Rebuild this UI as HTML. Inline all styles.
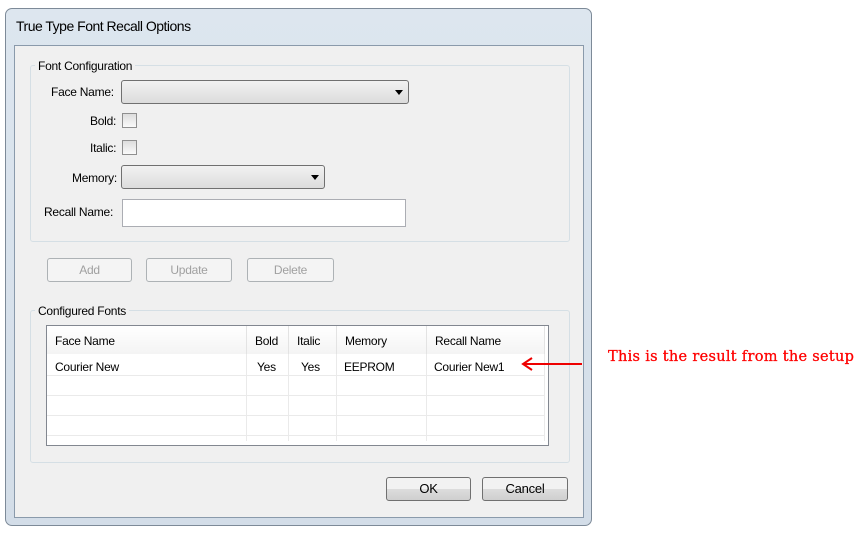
<!DOCTYPE html><html><head><style>
body{margin:0;width:862px;height:534px;background:#fff;position:relative;overflow:hidden;font-family:"Liberation Sans",sans-serif;font-size:12px;color:#000;letter-spacing:-0.25px}
.a{position:absolute}
.frame{left:5px;top:8px;width:585px;height:516px;background:linear-gradient(#dde6ef,#d3dde8);border:1px solid #7d8a98;border-radius:7px}
.client{left:14px;top:45px;width:568px;height:471px;background:#f0f0f0;border:1px solid #8a9aab}
.grp{border:1px solid #d5dfe5;border-radius:3px}
.lbl{background:#f0f0f0;padding:0 3px}
.combo{border:1px solid #707070;border-radius:3px;background:linear-gradient(#f2f2f2,#dcdcdc)}
.combo:after{content:"";position:absolute;right:5px;top:9px;border-left:4px solid transparent;border-right:4px solid transparent;border-top:5px solid #000}
.chk{width:13px;height:13px;border:1px solid #8f8f8f;background:linear-gradient(#ddd,#fafafa)}
.btn{border:1px solid #adb2b5;border-radius:3px;background:#f4f4f4;color:#a0a0a0;text-align:center;line-height:22px;height:22px}
.btn2{border:1px solid #707070;border-radius:3px;background:linear-gradient(#f2f2f2 50%,#dddddd 50%,#cfcfcf);text-align:center;line-height:22px;height:22px;color:#000;font-size:13px}
.grid{left:46px;top:325px;width:501px;height:119px;border:1px solid #828790;background:#fff}
.h{position:absolute;top:0;height:28px;line-height:30px;border-right:1px solid #e3e3e3;background:linear-gradient(#fff,#f4f4f4);padding-left:8px;box-sizing:border-box}
.vl{position:absolute;top:28px;bottom:4px;width:1px;background:#eaeaea}
.hl{position:absolute;left:0;right:4px;height:1px;background:#eaeaea}
</style></head><body>
<div class="a frame"></div>
<div class="a" style="left:16px;top:18px;font-size:14px;letter-spacing:-0.5px">True Type Font Recall Options</div>
<div class="a client"></div>
<div class="a grp" style="left:30px;top:65px;width:538px;height:175px"></div>
<div class="a lbl" style="left:35px;top:59px">Font Configuration</div>
<div class="a" style="left:51px;top:85px">Face Name:</div>
<div class="a combo" style="left:121px;top:80px;width:286px;height:22px"></div>
<div class="a" style="left:90px;top:114px">Bold:</div>
<div class="a chk" style="left:122px;top:113px"></div>
<div class="a" style="left:90px;top:141px">Italic:</div>
<div class="a chk" style="left:122px;top:140px"></div>
<div class="a" style="left:72px;top:171px">Memory:</div>
<div class="a combo" style="left:121px;top:165px;width:202px;height:22px"></div>
<div class="a" style="left:44px;top:205px">Recall Name:</div>
<div class="a" style="left:122px;top:199px;width:282px;height:26px;border:1px solid #abadb3;background:#fff"></div>
<div class="a btn" style="left:47px;top:258px;width:83px">Add</div>
<div class="a btn" style="left:146px;top:258px;width:84px">Update</div>
<div class="a btn" style="left:247px;top:258px;width:85px">Delete</div>
<div class="a grp" style="left:30px;top:310px;width:538px;height:151px"></div>
<div class="a lbl" style="left:35px;top:304px">Configured Fonts</div>
<div class="a grid">
<div class="h" style="left:0;width:200px">Face Name</div>
<div class="h" style="left:200px;width:42px">Bold</div>
<div class="h" style="left:242px;width:48px">Italic</div>
<div class="h" style="left:290px;width:90px">Memory</div>
<div class="h" style="left:380px;width:118px">Recall Name</div>
<div class="vl" style="left:199px"></div><div class="vl" style="left:241px"></div><div class="vl" style="left:289px"></div><div class="vl" style="left:379px"></div><div class="vl" style="left:497px"></div>
<div class="hl" style="top:49px"></div><div class="hl" style="top:69px"></div><div class="hl" style="top:89px"></div><div class="hl" style="top:109px"></div>
<div class="a" style="left:8px;top:34px">Courier New</div>
<div class="a" style="left:210px;top:34px">Yes</div>
<div class="a" style="left:254px;top:34px">Yes</div>
<div class="a" style="left:297px;top:34px">EEPROM</div>
<div class="a" style="left:387px;top:34px">Courier New1</div>
</div>
<div class="a btn2" style="left:386px;top:477px;width:83px">OK</div>
<div class="a btn2" style="left:482px;top:477px;width:84px">Cancel</div>
<svg class="a" style="left:520px;top:357px" width="64" height="14"><line x1="4" y1="7" x2="62" y2="7" stroke="#e00" stroke-width="2"/><path d="M12 1 L3 7 L12 13" fill="none" stroke="#e00" stroke-width="2"/></svg>
<div class="a" style="left:608px;top:349px;color:#f00;font-family:'DejaVu Serif',serif;font-size:14.5px;letter-spacing:0.3px;-webkit-text-stroke:0.3px #f00">This is the result from the setup</div>
</body></html>
